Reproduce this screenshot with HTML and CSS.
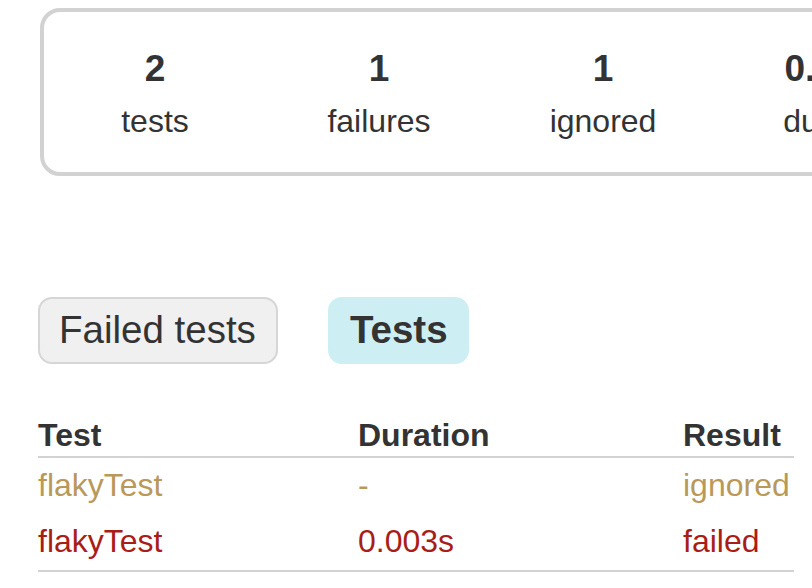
FILE: index.html
```html
<!DOCTYPE html>
<html lang="en">
<head>
<meta charset="utf-8">
<title>Test results</title>
<link rel="stylesheet" href="styles.css">
</head>
<body>
<div class="page">
  <div class="summary">
    <div class="info">
      <div class="counter">2</div>
      <div class="label">tests</div>
    </div>
    <div class="info">
      <div class="counter">1</div>
      <div class="label">failures</div>
    </div>
    <div class="info">
      <div class="counter">1</div>
      <div class="label">ignored</div>
    </div>
    <div class="info info-duration">
      <div class="counter">0.003s</div>
      <div class="label">duration</div>
    </div>
  </div>

  <ul class="tabs">
    <li class="tab">Failed tests</li>
    <li class="tab selected">Tests</li>
  </ul>

  <table class="results">
    <colgroup>
      <col class="col-test">
      <col class="col-duration">
      <col class="col-result">
    </colgroup>
    <thead>
      <tr>
        <th>Test</th>
        <th>Duration</th>
        <th>Result</th>
      </tr>
    </thead>
    <tbody>
      <tr class="skipped">
        <td>flakyTest</td>
        <td>-</td>
        <td>ignored</td>
      </tr>
      <tr class="failed">
        <td>flakyTest</td>
        <td>0.003s</td>
        <td>failed</td>
      </tr>
    </tbody>
  </table>
</div>
</body>
</html>
```

FILE: styles.css
```css
html, body {
  margin: 0;
  padding: 0;
  overflow: hidden;
  background: #ffffff;
}

body {
  font-family: "Liberation Sans", Arial, Helvetica, sans-serif;
  font-size: 32px;
  color: #333333;
}

.page {
  padding: 8px 0 0 38px;
}

/* Summary box */
.summary {
  display: flex;
  gap: 26px;
  width: max-content;
  margin-left: 2px;
  border: 4px solid #d2d2d2;
  border-radius: 20px;
  padding: 36px 12px 33px;
}

.info {
  width: 198px;
  text-align: center;
}

.info-duration {
  width: 226px;
}

.counter {
  font-size: 37px;
  font-weight: bold;
  line-height: 42px;
  margin-bottom: 13px;
}

.label {
  line-height: 36px;
}

/* Tabs */
.tabs {
  display: flex;
  gap: 50px;
  list-style: none;
  margin: 121px 0 0;
  padding: 0;
}

.tab {
  border: 2px solid #d6d6d6;
  background: #f0f0f0;
  border-radius: 14px;
  padding: 10px 20px 11px 19px;
  font-size: 38.5px;
  line-height: 42px;
}

.tab.selected {
  background: #cdeef3;
  border-color: #cdeef3;
  font-weight: bold;
  padding-left: 20px;
  padding-right: 19px;
}

/* Results table */
.results {
  margin-top: 53px;
  width: 756px;
  table-layout: fixed;
  border-collapse: separate;
  border-spacing: 0;
}

.col-test { width: 320px; }
.col-duration { width: 325px; }
.col-result { width: 111px; }

.results th {
  text-align: left;
  font-weight: bold;
  padding: 0 0 3px;
  line-height: 36px;
  border-bottom: 2px solid #d2d2d2;
}

.results td {
  padding: 9px 0 11px;
  line-height: 36px;
  white-space: nowrap;
}

.results tbody tr:last-child td {
  border-bottom: 2px solid #d2d2d2;
}

.skipped td {
  color: #b9995a;
}

.failed td {
  color: #a91d17;
}
```
